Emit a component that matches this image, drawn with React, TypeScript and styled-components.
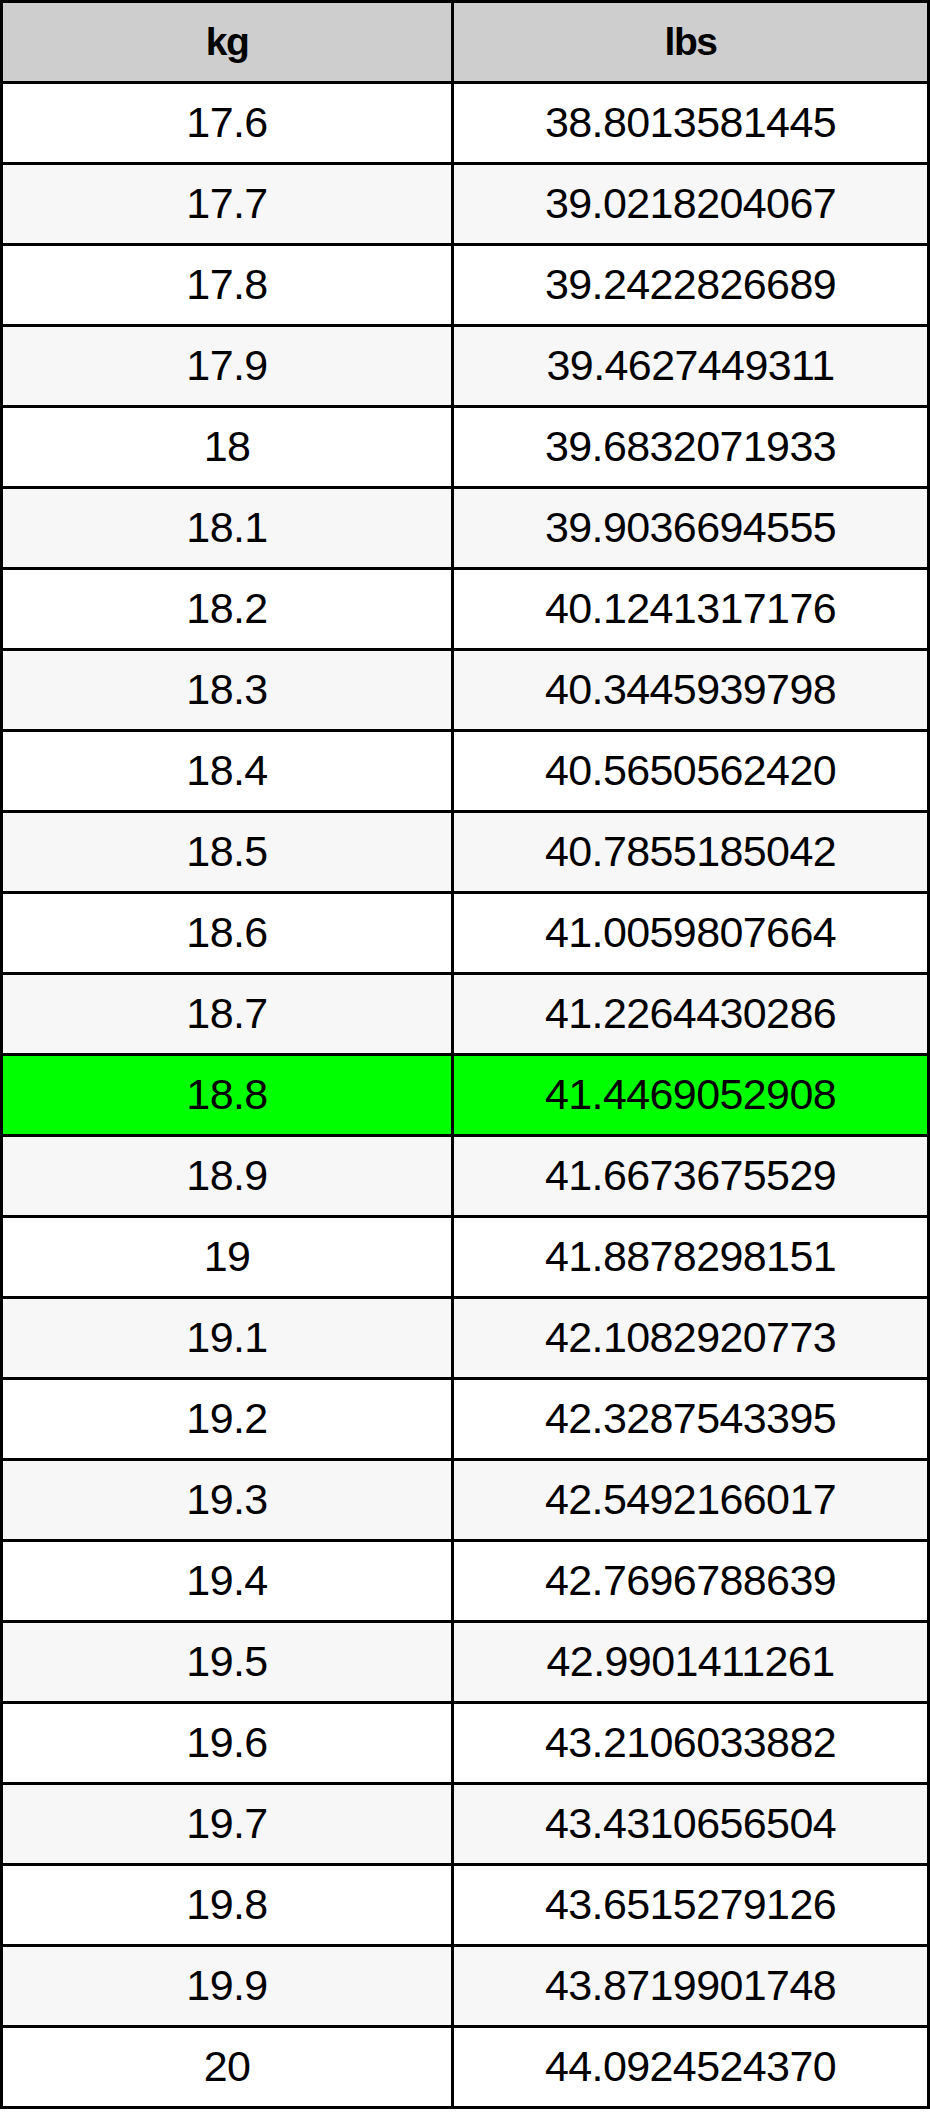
import React from "react";
import styled, { createGlobalStyle } from "styled-components";

const GlobalStyle = createGlobalStyle`
  html, body {
    margin: 0;
    padding: 0;
    background: #ffffff;
  }
  body {
    font-family: "Liberation Sans", Arial, Helvetica, sans-serif;
    color: #000000;
  }
`;

const ROWS: [string, string][] = [
  ["17.6", "38.8013581445"],
  ["17.7", "39.0218204067"],
  ["17.8", "39.2422826689"],
  ["17.9", "39.4627449311"],
  ["18", "39.6832071933"],
  ["18.1", "39.9036694555"],
  ["18.2", "40.1241317176"],
  ["18.3", "40.3445939798"],
  ["18.4", "40.5650562420"],
  ["18.5", "40.7855185042"],
  ["18.6", "41.0059807664"],
  ["18.7", "41.2264430286"],
  ["18.8", "41.4469052908"],
  ["18.9", "41.6673675529"],
  ["19", "41.8878298151"],
  ["19.1", "42.1082920773"],
  ["19.2", "42.3287543395"],
  ["19.3", "42.5492166017"],
  ["19.4", "42.7696788639"],
  ["19.5", "42.9901411261"],
  ["19.6", "43.2106033882"],
  ["19.7", "43.4310656504"],
  ["19.8", "43.6515279126"],
  ["19.9", "43.8719901748"],
  ["20", "44.0924524370"],
];

const HIGHLIGHT = "18.8";

const Table = styled.div`
  display: grid;
  grid-template-columns: 451px 476px;
  grid-auto-rows: 81px;
  width: 927px;
  border-left: 3px solid #000;
  border-top: 3px solid #000;
`;

type Tone = "head" | "odd" | "even" | "hit";

const toneBg: Record<Tone, string> = {
  head: "#cecece",
  odd: "#ffffff",
  even: "#f7f7f7",
  hit: "#00ff00",
};

const Cell = styled.div<{ $tone: Tone }>`
  display: flex;
  align-items: center;
  justify-content: center;
  box-sizing: border-box;
  border-right: 3px solid #000;
  border-bottom: 3px solid #000;
  background: ${(p) => toneBg[p.$tone]};
  font-size: ${(p) => (p.$tone === "head" ? "39px" : "43px")};
  font-weight: ${(p) => (p.$tone === "head" ? 700 : 400)};
  letter-spacing: ${(p) => (p.$tone === "head" ? "-1.5px" : "-0.6px")};
  line-height: 1;
  padding-bottom: 1px;
`;

const App: React.FC = () => {
  return (
    <>
      <GlobalStyle />
      <Table>
        <Cell $tone="head">kg</Cell>
        <Cell $tone="head">lbs</Cell>
        {ROWS.map(([kg, lbs], i) => {
          const tone: Tone =
            kg === HIGHLIGHT ? "hit" : i % 2 === 0 ? "odd" : "even";
          return (
            <React.Fragment key={kg}>
              <Cell $tone={tone}>{kg}</Cell>
              <Cell $tone={tone}>{lbs}</Cell>
            </React.Fragment>
          );
        })}
      </Table>
    </>
  );
};

export default App;
